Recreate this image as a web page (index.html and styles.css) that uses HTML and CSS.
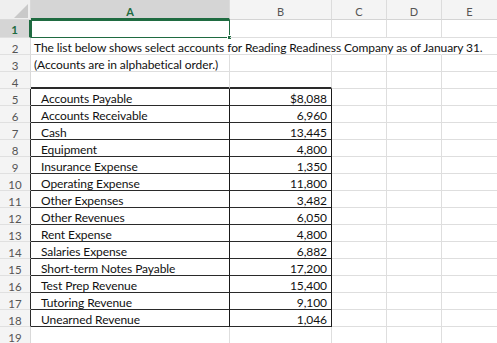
FILE: index.html
```html
<!DOCTYPE html>
<html>
<head>
<meta charset="utf-8">
<link rel="stylesheet" href="styles.css">
</head>
<body>
<div class="sheet">
  <div class="corner"><svg class="tri" width="14" height="14" viewBox="0 0 14 14"><polygon points="14,0 14,14 0,14" fill="#c9c9c9"/></svg></div>
  <div class="ch sel">A</div>
  <div class="ch">B</div>
  <div class="ch">C</div>
  <div class="ch">D</div>
  <div class="ch last">E</div>

  <div class="rh sel">1</div>
  <div class="c a1"><span class="handle"></span></div><div class="c"></div><div class="c"></div><div class="c"></div><div class="c last"></div>

  <div class="rh">2</div>
  <div class="c over">The list below shows select accounts for Reading Readiness Company as of January 31.</div><div class="c nob"></div><div class="c nob"></div><div class="c nob"></div><div class="c last"></div>

  <div class="rh">3</div>
  <div class="c">(Accounts are in alphabetical order.)</div><div class="c"></div><div class="c"></div><div class="c"></div><div class="c last"></div>

  <div class="rh">4</div>
  <div class="c top"></div><div class="c top"></div><div class="c"></div><div class="c"></div><div class="c last"></div>

  <div class="rh bx">5</div><div class="c ba">Accounts Payable</div><div class="c bb">$8,088</div><div class="c"></div><div class="c"></div><div class="c last"></div>
  <div class="rh bx">6</div><div class="c ba">Accounts Receivable</div><div class="c bb">6,960</div><div class="c"></div><div class="c"></div><div class="c last"></div>
  <div class="rh bx">7</div><div class="c ba">Cash</div><div class="c bb">13,445</div><div class="c"></div><div class="c"></div><div class="c last"></div>
  <div class="rh bx">8</div><div class="c ba">Equipment</div><div class="c bb">4,800</div><div class="c"></div><div class="c"></div><div class="c last"></div>
  <div class="rh bx">9</div><div class="c ba">Insurance Expense</div><div class="c bb">1,350</div><div class="c"></div><div class="c"></div><div class="c last"></div>
  <div class="rh bx">10</div><div class="c ba">Operating Expense</div><div class="c bb">11,800</div><div class="c"></div><div class="c"></div><div class="c last"></div>
  <div class="rh bx">11</div><div class="c ba">Other Expenses</div><div class="c bb">3,482</div><div class="c"></div><div class="c"></div><div class="c last"></div>
  <div class="rh bx">12</div><div class="c ba">Other Revenues</div><div class="c bb">6,050</div><div class="c"></div><div class="c"></div><div class="c last"></div>
  <div class="rh bx">13</div><div class="c ba">Rent Expense</div><div class="c bb">4,800</div><div class="c"></div><div class="c"></div><div class="c last"></div>
  <div class="rh bx">14</div><div class="c ba">Salaries Expense</div><div class="c bb">6,882</div><div class="c"></div><div class="c"></div><div class="c last"></div>
  <div class="rh bx">15</div><div class="c ba">Short-term Notes Payable</div><div class="c bb">17,200</div><div class="c"></div><div class="c"></div><div class="c last"></div>
  <div class="rh bx">16</div><div class="c ba">Test Prep Revenue</div><div class="c bb">15,400</div><div class="c"></div><div class="c"></div><div class="c last"></div>
  <div class="rh bx">17</div><div class="c ba">Tutoring Revenue</div><div class="c bb">9,100</div><div class="c"></div><div class="c"></div><div class="c last"></div>
  <div class="rh bx">18</div><div class="c ba">Unearned Revenue</div><div class="c bb">1,046</div><div class="c"></div><div class="c"></div><div class="c last"></div>

  <div class="rh">19</div>
  <div class="c"></div><div class="c"></div><div class="c"></div><div class="c"></div><div class="c last"></div>
</div>
</body>
</html>
```
FILE: styles.css
```css
html, body {
  margin: 0;
  padding: 0;
  background: #ffffff;
}
body {
  width: 497px;
  height: 343px;
  overflow: hidden;
  font-family: Lato, "Open Sans", "Liberation Sans", sans-serif;
}
.sheet {
  display: grid;
  grid-template-columns: 31px 199px 102px 55px 55px 55px;
  grid-template-rows: 20px 18px repeat(17, 17px);
}
.corner {
  background: #efefef;
  border-right: 1px solid #d9d9d9;
  border-bottom: 1px solid #d9d9d9;
  box-sizing: border-box;
  display: flex;
  align-items: flex-end;
  justify-content: flex-end;
  padding: 0 2px 1px 0;
}
.tri {
  display: block;
}
.ch {
  background: #f4f4f4;
  border-right: 1px solid #dcdcdc;
  border-bottom: 1px solid #d4d4d4;
  box-sizing: border-box;
  display: flex;
  align-items: center;
  justify-content: center;
  font-size: 11px;
  color: #555555;
  padding-top: 3px;
}
.ch.sel {
  background: #d5d5d5;
  border-bottom: 2px solid #1f6b41;
  color: #1f6b41;
  font-weight: 700;
  padding-top: 4px;
}
.ch.last, .c.last {
  border-right: none;
}
.rh {
  background: #f4f4f4;
  border-right: 1px solid #d9d9d9;
  border-bottom: 1px solid #e0e0e0;
  box-sizing: border-box;
  display: flex;
  align-items: center;
  justify-content: center;
  font-size: 11.5px;
  color: #555555;
  padding-top: 4px;
}
.rh.sel {
  background: #d5d5d5;
  color: #1f6b41;
  font-weight: 700;
  border-right: 2px solid #1f6b41;
  padding-top: 2px;
}
.rh.bx {
  border-right: 1px solid #2a2a2a;
}
.c {
  border-right: 1px solid #dedede;
  border-bottom: 1px solid #dedede;
  box-sizing: border-box;
  font-size: 12px;
  letter-spacing: -0.08px;
  color: #111111;
  white-space: nowrap;
  display: flex;
  align-items: center;
  padding: 3px 0 0 3px;
  position: relative;
}
.c.over {
  overflow: visible;
  z-index: 1;
  border-right: none;
}
.c.nob {
  border-right-color: transparent;
}
.c.a1 {
  border: 1px solid #1f6b41;
}
.handle {
  position: absolute;
  right: -3px;
  bottom: -3px;
  width: 5px;
  height: 5px;
  background: #1f6b41;
  border: 1px solid #ffffff;
  box-sizing: border-box;
}
.c.top {
  border-bottom: 2px solid #2a2a2a;
}
.c.ba {
  border-bottom: 1px solid #2a2a2a;
  border-right: 1px solid #1a1a1a;
  padding-left: 10px;
}
.c.bb {
  border-bottom: 1px solid #2a2a2a;
  border-right: 1px solid #1a1a1a;
  justify-content: flex-end;
  padding-right: 4px;
}
```
